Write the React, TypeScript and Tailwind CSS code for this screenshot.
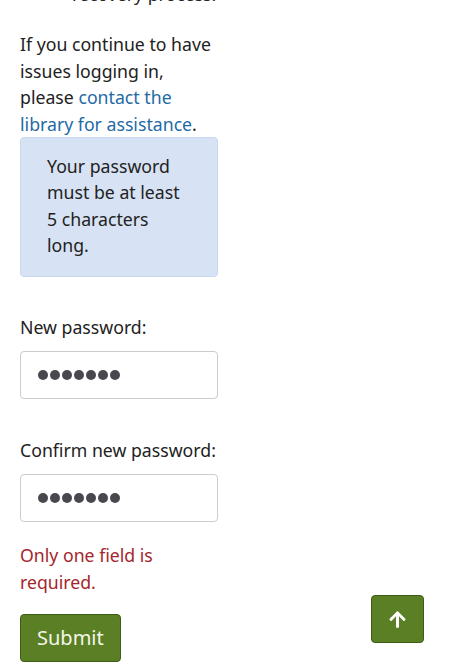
export default function App() {
  return (
    <div
      className="relative h-[665px] overflow-hidden bg-white text-[17.7px] leading-[26.4px] text-[#222]"
      style={{ fontFamily: '"Noto Sans", "Open Sans", sans-serif' }}
    >
      <div className="w-[220px] pl-5">
        <p className="-mt-[19px] pl-[52px]">recovery process.</p>

        <p className="mt-[24px]">
          If you continue to have issues logging in, please{" "}
          <a href="#" className="text-[#1f6aa5]">
            contact the library for assistance
          </a>
          .
        </p>

        <div className="mt-0 mr-[2px] rounded-[4px] border border-[#c8d9ee] bg-[#d7e3f4] pt-[15px] pb-[17px] pl-[26px] pr-[27px]">
          Your password must be at least 5 characters long.
        </div>

        <label className="mt-[37px] block">New password:</label>
        <div className="mt-[11px] mr-[2px] flex h-[48px] items-center rounded-[4px] border border-[#ccc] pl-[17px]">
          <Dots />
        </div>

        <label className="mt-[38px] block">Confirm new password:</label>
        <div className="mt-[11px] mr-[2px] flex h-[48px] items-center rounded-[4px] border border-[#ccc] pl-[17px]">
          <Dots />
        </div>

        <p className="mt-[20px] text-[#a4262c]">Only one field is required.</p>

        <button className="mt-[19px] h-[48px] rounded-[4px] border border-[#3f5c17] bg-[#5b7f24] px-4 text-[20px] text-[#f3f7e8]">
          Submit
        </button>
      </div>

      <button className="absolute bottom-[22px] right-[50px] flex h-[48px] w-[53px] items-center justify-center rounded-[4px] border border-[#3f5c17] bg-[#5b7f24]">
        <svg width="19" height="19" viewBox="0 0 448 512" fill="#fff">
          <path d="M34.9 289.5l-22.2-22.2c-9.4-9.4-9.4-24.6 0-33.9L207 39c9.4-9.4 24.6-9.4 33.9 0l194.3 194.3c9.4 9.4 9.4 24.6 0 33.9L413 289.4c-9.5 9.5-25 9.3-34.3-.4L264 168.6V456c0 13.3-10.7 24-24 24h-32c-13.3 0-24-10.7-24-24V168.6L69.2 289.1c-9.3 9.8-24.8 10-34.3.4z" />
        </svg>
      </button>
    </div>
  );
}

function Dots() {
  return (
    <div className="flex gap-[2px]">
      {Array.from({ length: 7 }).map((_, i) => (
        <span key={i} className="h-[10px] w-[10px] rounded-full bg-[#48484e]" />
      ))}
    </div>
  );
}
